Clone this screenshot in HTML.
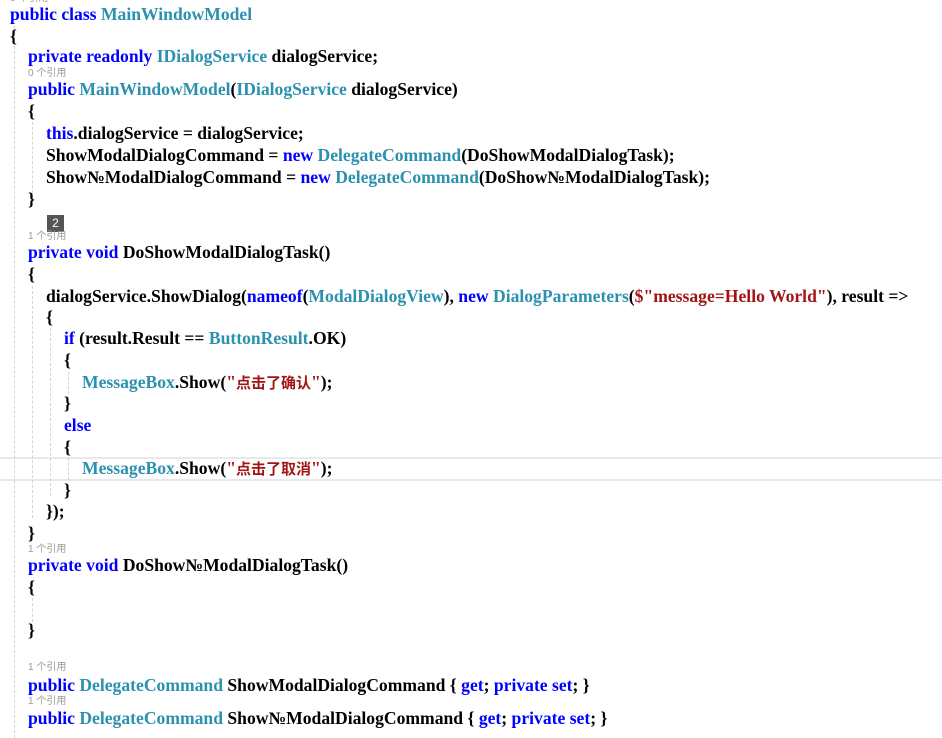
<!DOCTYPE html>
<html><head><meta charset="utf-8"><style>
body{margin:0;width:942px;height:738px;background:#fff;position:relative;overflow:hidden;font-family:"Liberation Serif","Noto Serif CJK SC",serif;font-weight:bold;font-size:17.6px;color:#000}
.l{position:absolute;white-space:pre;line-height:22px;height:22px}
.k{color:#0000ff}.t{color:#2b91af}.s{color:#a31515}
.c{position:absolute;font-family:"Liberation Sans","Noto Sans CJK SC",sans-serif;font-weight:normal;font-size:10px;color:#999;white-space:pre;line-height:10px}
.g{position:absolute;width:0;border-left:1px dashed #d4d4d4}
.cjk{font-family:"Noto Sans CJK SC",sans-serif;font-weight:bold;font-size:15px}
</style></head><body>
<div style="position:absolute;left:0;top:457px;width:942px;height:20px;border-top:2px solid #e8e8ee;border-bottom:2px solid #e8e8ee"></div>
<div class="g" style="left:14px;top:26px;height:712px"></div>
<div class="g" style="left:32px;top:122px;height:76px"></div>
<div class="g" style="left:32px;top:286px;height:232px"></div>
<div class="g" style="left:32px;top:598px;height:24px"></div>
<div class="g" style="left:50px;top:328px;height:168px"></div>
<div class="g" style="left:68px;top:372px;height:22px"></div>
<div class="g" style="left:68px;top:458px;height:22px"></div>
<div class="c" style="left:10px;top:-6px">0 个引用</div>
<div class="l" style="left:10px;top:3px"><span class="k">public class </span><span class="t">MainWindowModel</span></div>
<div class="l" style="left:10px;top:25px">{</div>
<div class="l" style="left:28px;top:45px"><span class="k">private readonly </span><span class="t">IDialogService</span> dialogService;</div>
<div class="c" style="left:28px;top:69px">0 个引用</div>
<div class="l" style="left:28px;top:78px"><span class="k">public </span><span class="t">MainWindowModel</span>(<span class="t">IDialogService</span> dialogService)</div>
<div class="l" style="left:28px;top:100px">{</div>
<div class="l" style="left:46px;top:122px"><span class="k">this</span>.dialogService = dialogService;</div>
<div class="l" style="left:46px;top:144px">ShowModalDialogCommand = <span class="k">new </span><span class="t">DelegateCommand</span>(DoShowModalDialogTask);</div>
<div class="l" style="left:46px;top:166px">Show№ModalDialogCommand = <span class="k">new </span><span class="t">DelegateCommand</span>(DoShow№ModalDialogTask);</div>
<div class="l" style="left:28px;top:188px">}</div>
<div style="position:absolute;left:47px;top:215px;width:17px;height:17px;background:#555;color:#fff;font-family:'Liberation Sans',sans-serif;font-weight:normal;font-size:12px;text-align:center;line-height:17px">2</div>
<div class="c" style="left:28px;top:232px">1 个引用</div>
<div class="l" style="left:28px;top:241px"><span class="k">private void </span>DoShowModalDialogTask()</div>
<div class="l" style="left:28px;top:263px">{</div>
<div class="l" style="left:46px;top:285px">dialogService.ShowDialog(<span class="k">nameof</span>(<span class="t">ModalDialogView</span>), <span class="k">new </span><span class="t">DialogParameters</span>(<span class="s">$"message=Hello World"</span>), result =&gt;</div>
<div class="l" style="left:46px;top:306px">{</div>
<div class="l" style="left:64px;top:327px"><span class="k">if</span> (result.Result == <span class="t">ButtonResult</span>.OK)</div>
<div class="l" style="left:64px;top:349px">{</div>
<div class="l" style="left:82px;top:371px"><span class="t">MessageBox</span>.Show(<span class="s">"<span class="cjk">点击了确认</span>"</span>);</div>
<div class="l" style="left:64px;top:392px">}</div>
<div class="l" style="left:64px;top:414px"><span class="k">else</span></div>
<div class="l" style="left:64px;top:436px">{</div>
<div class="l" style="left:82px;top:457px"><span class="t">MessageBox</span>.Show(<span class="s">"<span class="cjk">点击了取消</span>"</span>);</div>
<div class="l" style="left:64px;top:479px">}</div>
<div class="l" style="left:46px;top:500px">});</div>
<div class="l" style="left:28px;top:522px">}</div>
<div class="c" style="left:28px;top:545px">1 个引用</div>
<div class="l" style="left:28px;top:554px"><span class="k">private void </span>DoShow№ModalDialogTask()</div>
<div class="l" style="left:28px;top:576px">{</div>
<div class="l" style="left:28px;top:619px">}</div>
<div class="c" style="left:28px;top:663px">1 个引用</div>
<div class="l" style="left:28px;top:674px"><span class="k">public </span><span class="t">DelegateCommand</span> ShowModalDialogCommand { <span class="k">get</span>; <span class="k">private set</span>; }</div>
<div class="c" style="left:28px;top:697px">1 个引用</div>
<div class="l" style="left:28px;top:707px"><span class="k">public </span><span class="t">DelegateCommand</span> Show№ModalDialogCommand { <span class="k">get</span>; <span class="k">private set</span>; }</div>
</body></html>
